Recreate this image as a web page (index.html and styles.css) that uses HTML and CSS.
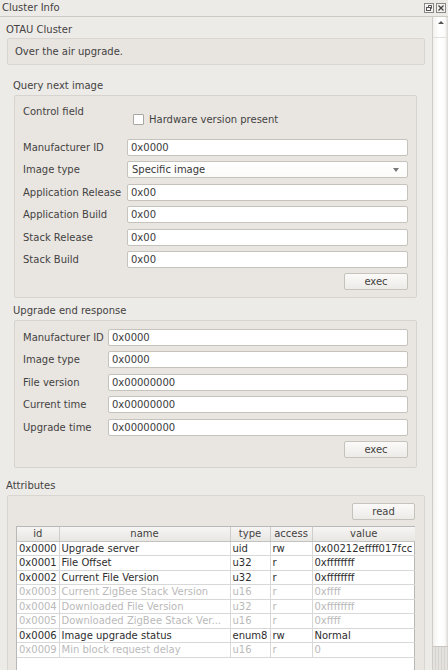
FILE: index.html
```html
<!DOCTYPE html>
<html>
<head>
<meta charset="utf-8">
<link rel="stylesheet" href="styles.css">
</head>
<body>
<div class="window">
  <div class="titlebar">
    <span class="title">Cluster Info</span>
    <div class="tb-icons">
      <svg width="10" height="10" viewBox="0 0 10 10"><rect x="0.5" y="0.5" width="9" height="9" fill="#f4f3f1" stroke="#8a8884"/><rect x="2.5" y="4.5" width="4" height="3" fill="none" stroke="#555"/><path d="M4.5 4.5V2.5h3v3h-1" fill="none" stroke="#555"/></svg>
      <svg width="10" height="10" viewBox="0 0 10 10"><rect x="0.5" y="0.5" width="9" height="9" fill="#f4f3f1" stroke="#8a8884"/><path d="M2.5 2.5l5 5M7.5 2.5l-5 5" stroke="#444" stroke-width="1.3"/></svg>
    </div>
  </div>
  <div class="main">
    <div class="content">
      <div class="section-title">OTAU Cluster</div>
      <div class="desc">Over the air upgrade.</div>

      <div class="sub">
        <div class="group-title">Query next image</div>
        <div class="group g1">
          <div class="ctrl-row">
            <div class="lbl l1 top">Control field</div>
            <label class="check"><span class="box"></span><span>Hardware version present</span></label>
          </div>
          <div class="row first"><div class="lbl l1">Manufacturer ID</div><div class="input">0x0000</div></div>
          <div class="row"><div class="lbl l1">Image type</div><div class="input combo">Specific image<span class="arrow"></span></div></div>
          <div class="row"><div class="lbl l1">Application Release</div><div class="input">0x00</div></div>
          <div class="row"><div class="lbl l1">Application Build</div><div class="input">0x00</div></div>
          <div class="row"><div class="lbl l1">Stack Release</div><div class="input">0x00</div></div>
          <div class="row"><div class="lbl l1">Stack Build</div><div class="input">0x00</div></div>
          <div class="btn-row"><div class="btn">exec</div></div>
        </div>

        <div class="group-title t2">Upgrade end response</div>
        <div class="group g2">
          <div class="row2"><div class="lbl l2">Manufacturer ID</div><div class="input">0x0000</div></div>
          <div class="row2"><div class="lbl l2">Image type</div><div class="input">0x0000</div></div>
          <div class="row2"><div class="lbl l2">File version</div><div class="input">0x00000000</div></div>
          <div class="row2"><div class="lbl l2">Current time</div><div class="input">0x00000000</div></div>
          <div class="row2"><div class="lbl l2">Upgrade time</div><div class="input">0x00000000</div></div>
          <div class="btn-row"><div class="btn">exec</div></div>
        </div>
      </div>

      <div class="section-title t3">Attributes</div>
      <div class="attr-box">
        <div class="read-row"><div class="btn read">read</div></div>
        <div class="tableview">
          <table class="attrs">
            <colgroup><col class="c-id"><col class="c-name"><col class="c-type"><col class="c-acc"><col class="c-val"></colgroup>
            <thead><tr><th>id</th><th>name</th><th>type</th><th>access</th><th>value</th></tr></thead>
            <tbody>
              <tr><td>0x0000</td><td>Upgrade server</td><td>uid</td><td>rw</td><td>0x00212effff017fcc</td></tr>
              <tr><td>0x0001</td><td>File Offset</td><td>u32</td><td>r</td><td>0xffffffff</td></tr>
              <tr><td>0x0002</td><td>Current File Version</td><td>u32</td><td>r</td><td>0xffffffff</td></tr>
              <tr class="dis"><td>0x0003</td><td>Current ZigBee Stack Version</td><td>u16</td><td>r</td><td>0xffff</td></tr>
              <tr class="dis"><td>0x0004</td><td>Downloaded File Version</td><td>u32</td><td>r</td><td>0xffffffff</td></tr>
              <tr class="dis"><td>0x0005</td><td>Downloaded ZigBee Stack Ver...</td><td>u16</td><td>r</td><td>0xffff</td></tr>
              <tr><td>0x0006</td><td>Image upgrade status</td><td>enum8</td><td>rw</td><td>Normal</td></tr>
              <tr class="dis"><td>0x0009</td><td>Min block request delay</td><td>u16</td><td>r</td><td>0</td></tr>
            </tbody>
          </table>
        </div>
      </div>
    </div>
    <div class="scrollbar">
      <div class="sb-up"><span class="up-arrow"></span></div>
      <div class="sb-track"></div>
      <div class="sb-handle"></div>
    </div>
  </div>
</div>
</body>
</html>
```

FILE: styles.css
```css
html, body {
  margin: 0;
  padding: 0;
}
body {
  width: 448px;
  height: 670px;
  overflow: hidden;
  background: #edebe8;
  font-family: "DejaVu Sans", "Noto Sans", sans-serif;
  font-size: 10px;
  color: #444241;
}
.window {
  width: 448px;
  height: 670px;
  display: flex;
  flex-direction: column;
}
.titlebar {
  height: 16px;
  border-bottom: 1px solid #cdc9c3;
  display: flex;
  align-items: center;
  justify-content: space-between;
  padding: 0 2px 0 2px;
  flex: none;
}
.title {
  line-height: 16px;
}
.tb-icons {
  display: flex;
  gap: 2px;
  margin-top: -1px;
}
.tb-icons svg { display: block; }
.main {
  flex: 1;
  display: flex;
  min-height: 0;
}
.content {
  width: 432px;
  flex: none;
  overflow: hidden;
}
.section-title {
  height: 14px;
  line-height: 14px;
  margin-top: 6px;
  padding-left: 6px;
}
.section-title.t3 { margin-top: 11px; }
.desc {
  margin: 1px 7px 0 7px;
  height: 25px;
  line-height: 25px;
  background: #e8e5e1;
  border: 1px solid #d9d5d0;
  border-radius: 2px;
  padding-left: 7px;
}
.sub {
  padding: 0 15px 0 14px;
}
.group-title {
  height: 14px;
  line-height: 14px;
  margin-top: 14px;
  margin-left: -1px;
}
.group-title.t2 { margin-top: 6px; }
.group {
  margin-top: 2px;
  border: 1px solid #d7d3ce;
  border-radius: 2px;
  background: #e9e6e2;
  padding: 9px 8px 7px 8px;
}
.g2 { padding-top: 8px; padding-bottom: 9px; }
.ctrl-row {
  display: flex;
  height: 21px;
  margin-bottom: 13px;
}
.lbl {
  flex: none;
  height: 17px;
  line-height: 17px;
  white-space: nowrap;
}
.lbl.top { line-height: 14px; height: 14px; }
.l1 { width: 104px; }
.l2 { width: 85px; }
.check {
  display: flex;
  align-items: center;
  gap: 5px;
  margin-top: 7px;
  margin-left: 6px;
  height: 14px;
}
.box {
  width: 9px;
  height: 9px;
  background: #fdfdfd;
  border: 1px solid #aaa6a0;
  border-radius: 1px;
}
.row {
  display: flex;
  height: 17px;
  margin-top: 5.4px;
}
.row.first { margin-top: 0; }
.row2 {
  display: flex;
  height: 17px;
  margin-bottom: 5.5px;
}
.row2:nth-child(5) { margin-bottom: 0; }
.input {
  flex: 1;
  height: 15px;
  line-height: 15px;
  background: #ffffff;
  border: 1px solid #c6c2bc;
  border-radius: 2px;
  padding-left: 3px;
  color: #3a3a3a;
  position: relative;
}
.combo {
  padding-left: 4px;
  background: linear-gradient(#ffffff, #fbfbfa);
}
.arrow {
  position: absolute;
  right: 8px;
  top: 6px;
  width: 0;
  height: 0;
  border-left: 3px solid transparent;
  border-right: 3px solid transparent;
  border-top: 4px solid #777;
}
.btn-row {
  display: flex;
  justify-content: flex-end;
  margin-top: 5px;
}
.btn {
  width: 62px;
  height: 15px;
  line-height: 15px;
  text-align: center;
  border: 1px solid #c6c2bc;
  border-radius: 2px;
  background: linear-gradient(#fbfaf9, #ecebe8);
}
.attr-box {
  margin: 2px 7px 0 7px;
  border: 1px solid #d9d5d0;
  border-radius: 2px;
  background: #e9e6e2;
  padding: 7px 9px 0 8px;
  height: 200px;
}
.read-row {
  display: flex;
  justify-content: flex-end;
}
.btn.read { width: 61px; }
.tableview {
  margin-top: 6px;
  border: 1px solid #b8b8b8;
  background: #ffffff;
  height: 200px;
}
.attrs {
  border-collapse: collapse;
  table-layout: fixed;
  width: 398px;
}
.c-id { width: 42px; }
.c-name { width: 171px; }
.c-type { width: 40px; }
.c-acc { width: 42px; }
.c-val { width: 103px; }
.attrs th {
  height: 14px;
  line-height: 14px;
  font-weight: normal;
  padding: 0;
  text-align: center;
  background: linear-gradient(#f6f5f3, #e8e6e3);
  border-right: 1px solid #cfcdca;
  border-bottom: 1px solid #c4c2bf;
}
.attrs th:last-child { border-right: none; }
.attrs td {
  height: 13.5px;
  line-height: 13.5px;
  padding: 0 0 0 2px;
  white-space: nowrap;
  overflow: hidden;
  border-right: 1px solid #d8d8d8;
  border-bottom: 1px solid #d8d8d8;
  color: #2e2e2e;
}
.attrs td:last-child { border-right: none; }
.attrs tr.dis td { color: #bababa; }
.scrollbar {
  width: 15px;
  flex: none;
  border-left: 1px solid #cfcbc5;
  background: linear-gradient(90deg, #f2f1ef, #ffffff 40%, #fbfbfa 80%, #d9d6d2);
  display: flex;
  flex-direction: column;
}
.sb-up {
  height: 20px;
  border-bottom: 1px solid #e4e1dd;
  position: relative;
}
.up-arrow {
  position: absolute;
  left: 5px;
  top: 4px;
  width: 0;
  height: 0;
  border-left: 3px solid transparent;
  border-right: 3px solid transparent;
  border-bottom: 3px solid #555;
}
.sb-track { flex: 1; }
.sb-handle {
  height: 23px;
  border-top: 1px solid #c9c5c0;
  background: repeating-linear-gradient(90deg, #e4e2df 0 2px, #d6d3cf 2px 3px);
}
```
